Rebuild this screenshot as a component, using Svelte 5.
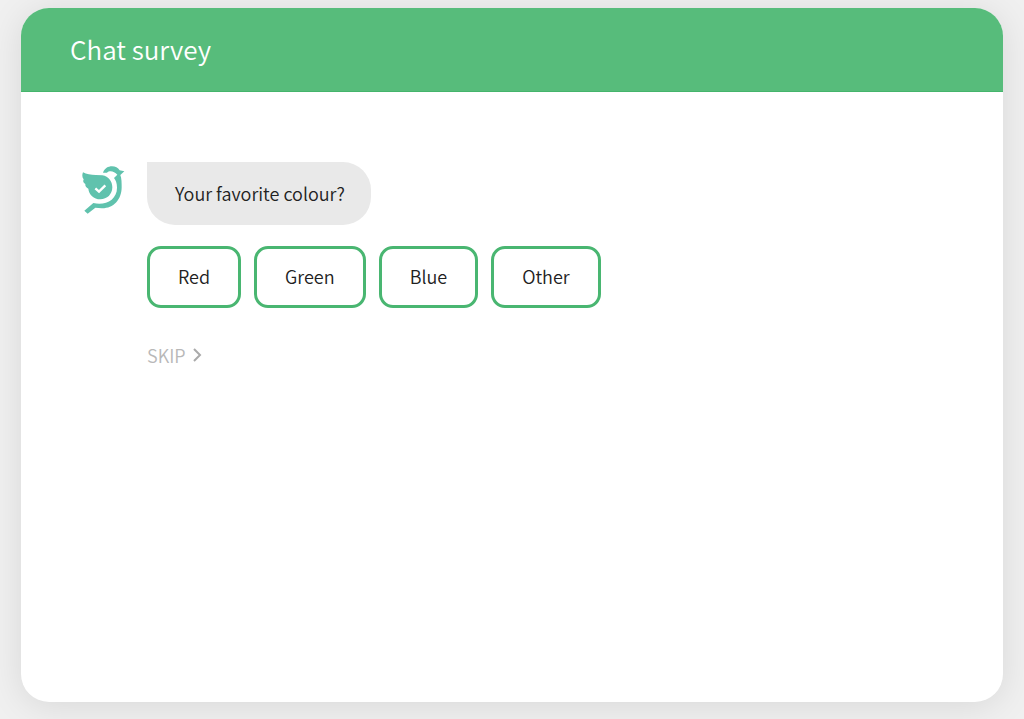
<script lang="ts">
  const answers = ['Red', 'Green', 'Blue', 'Other'];

  let selected = $state<string | null>(null);
</script>

<main class="card">
  <header class="header">
    <h1>Chat survey</h1>
  </header>

  <section class="chat">
    <svg class="avatar" viewBox="0 0 168 180" aria-hidden="true">
      <path
        class="fill"
        d="M24 43 C34 49 48 50 62 51 L82 52 C101 55 112 71 112 88 C112 109 96 124 76 124 C56 124 42 110 40 92 C34 89 30 84 31 78 C25 75 23 70 26 64 C21 58 21 50 24 43 Z"
      />
      <path
        class="fill"
        d="M84 44 C89 31 99 25 111 25 C121 25 129 29 134 37 L148 40 L136 51 C140 60 140 76 140 88 C140 126 114 152 80 151 L61 149 L38 167 L28 158 L55 135 C90 144 126 126 126 89 C126 75 122 66 117 60 L127 50 C118 39 103 36 96 44 Z"
      />
      <path class="tick" d="M61 91 L72 101 L91 82" />
    </svg>

    <div class="conversation">
      <p class="bubble">Your favorite colour?</p>

      <div class="answers">
        {#each answers as answer}
          <button
            type="button"
            class="answer"
            aria-pressed={selected === answer}
            onclick={() => (selected = answer)}
          >
            {answer}
          </button>
        {/each}
      </div>

      <button type="button" class="skip" onclick={() => (selected = null)}>
        SKIP
        <svg class="chevron" viewBox="0 0 10 14" aria-hidden="true">
          <path d="M2 1 L8 7 L2 13" />
        </svg>
      </button>
    </div>
  </section>
</main>

<style>
  :global(body) {
    background: #f0f0f0;
  }

  .card {
    box-sizing: border-box;
    min-height: calc(100vh - 25px);
    margin: 8px 21px 17px;
    overflow: hidden;
    border-radius: 28px;
    background: #fff;
    box-shadow: 0 4px 36px rgba(0, 0, 0, 0.1);
    color: #212121;
    font-family: 'Noto Sans CJK SC', 'Noto Sans', sans-serif;
    font-size: 18px;
    font-weight: 350;
    line-height: 28px;
  }

  .header {
    padding: 21px 49px 23px;
    border-bottom: 1px solid #45b56c;
    background: #57bc7b;
    color: #fff;
  }

  h1 {
    margin: 0;
    font-size: 26px;
    font-weight: 350;
    line-height: 39px;
  }

  .chat {
    display: flex;
    gap: 16px;
    padding: 70px 54px;
  }

  .avatar {
    flex: none;
    width: 56px;
    height: 60px;
    margin-top: -4px;
  }

  .fill {
    fill: #60c2ad;
  }

  .tick {
    fill: none;
    stroke: #fff;
    stroke-width: 7;
  }

  .conversation {
    display: flex;
    flex-direction: column;
    align-items: flex-start;
  }

  .bubble {
    margin: 0;
    padding: 17px 26px 18px 28px;
    border-radius: 0 28px 28px 28px;
    background: #e9e9e9;
  }

  .answers {
    display: flex;
    flex-wrap: wrap;
    gap: 13px;
    margin-top: 21px;
  }

  button {
    background: none;
    color: inherit;
    font: inherit;
    cursor: pointer;
  }

  .answer {
    padding: 13px 28px 15px;
    border: 3px solid #49b671;
    border-radius: 14px;
  }

  .skip {
    display: flex;
    align-items: center;
    gap: 6px;
    margin-top: 33px;
    padding: 0;
    border: 0;
    color: #b8b8b8;
  }

  .chevron {
    width: 10px;
    height: 14px;
    fill: none;
    stroke: #aaa;
    stroke-width: 2;
  }
</style>
